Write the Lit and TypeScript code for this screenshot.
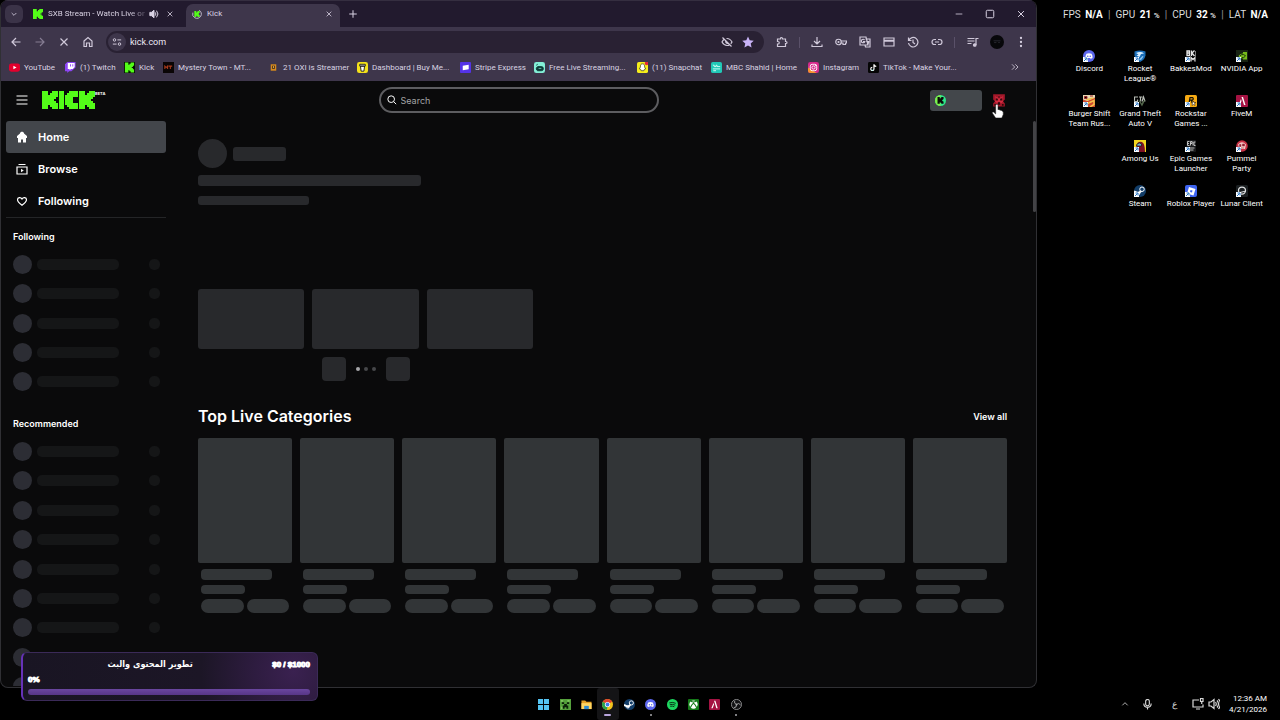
import { LitElement, html, svg, css, SVGTemplateResult } from "lit";
import { customElement, state } from "lit/decorators.js";
import { classMap } from "lit/directives/class-map.js";

const K_MARK = "M0 0h3v2h1v-1h1v-1h3v3h-1v1h-1v1h1v1h1v3h-3v-1h-1v-1h-1v2h-3z";

/* Outline icons on a 24 unit grid */
const line: Record<string, SVGTemplateResult> = {
  chevron: svg`<path d="M5 9l7 7 7-7" />`,
  up: svg`<path d="M4 16l8-8 8 8" />`,
  close: svg`<path d="M5 5l14 14M19 5L5 19" />`,
  plus: svg`<path d="M12 3v18M3 12h18" />`,
  back: svg`<path d="M21 12H4M12 4l-8 8 8 8" />`,
  forward: svg`<path d="M3 12h17M12 4l8 8-8 8" />`,
  home: svg`<path d="M4 10l8-7 8 7v11h-5v-7H9v7H4z" />`,
  tune: svg`<circle cx="6" cy="7" r="3" /><path d="M13 7h9M2 17h9" /><circle cx="18" cy="17" r="3" />`,
  eyeoff: svg`<path d="M3 3l18 18M7 6C4 8 2 12 2 12s4 7 10 7c2 0 4-.6 5.500-1.500M11 5c7-.5 11 7 11 7s-1 2-2.500 3.500M9.500 10a3.500 3.500 0 0 0 4.500 4.500" />`,
  puzzle: svg`<path d="M3 6h6V5a2 2 0 0 1 4 0v1h6v5h1a2 2 0 0 1 0 4h-1v6H3v-5h1a2.500 2.500 0 0 0 0-5H3z" />`,
  download: svg`<path d="M12 2v13M6 10l6 6 6-6M2 17v4h20v-4" />`,
  key: svg`<circle cx="7" cy="12" r="5.500" /><circle cx="7" cy="12" r="1" /><path d="M12 10h11v4h-2v3h-5v-3h-4" />`,
  translate: svg`<path d="M2 2h12l4 16H2zM13 6h9v16h-9l-1-4" /><path d="M11 8a3.500 3.500 0 1 0 .5 3H8M15 11h6M18 10v2M20 11c-1 4-3 5-4 6" />`,
  card: svg`<path d="M2 4h20v16H2z" /><path d="M2 9.500h20" stroke-width="4" />`,
  history: svg`<path d="M3 3v6h6M3.500 9A9.500 9.500 0 1 1 3 14M12 7v6l4 3" />`,
  link: svg`<path d="M10 7H7a5 5 0 0 0 0 10h3M14 7h3a5 5 0 0 1 0 10h-3M8 12h8" />`,
  queue: svg`<path d="M1 5h14M1 10h14M1 15h8M18 18V5h5" /><circle cx="15.500" cy="18" r="2.500" fill="currentColor" />`,
  square: svg`<rect x="3" y="3" width="18" height="18" rx="3" />`,
  minus: svg`<path d="M2 12h20" />`,
  more: svg`<path d="M3 4l8 8-8 8M13 4l8 8-8 8" />`,
  menu: svg`<path d="M1 4h22M1 12h22M1 20h22" />`,
  search: svg`<circle cx="10" cy="10" r="8" /><path d="M16 16l6 6" />`,
  browse: svg`<path d="M2 8h20v14H2zM5 3h14" /><path d="M10 11.500v7l5.500-3.500z" fill="currentColor" stroke="none" />`,
  heart: svg`<path d="M12 20.500C6.500 16.500 3 13.500 3 9.500c0-5 6.500-6 9-1.500 2.500-4.500 9-3.500 9 1.500 0 4-3.500 7-9 11z" />`,
  mic: svg`<rect x="8" y="1" width="8" height="14" rx="4" /><path d="M4 10c0 11 16 11 16 0M12 18v5" />`,
  monitor: svg`<path d="M14 4H2v14h20v-5M8 22h8" /><path d="M17 1h5v6h-5zM19.500 7v5" />`,
  sound: svg`<path d="M2 8h4l6-5v18l-6-5H2zM15 8q3 4 0 8M18 5q6 7 0 14M21 2q8 10 0 20" />`,
  speaker: svg`<path d="M2 8h4l6-5v18l-6-5H2z" fill="currentColor" /><path d="M15 8q3 4 0 8M18 4q7 8 0 16" />`,
};

/* Filled and multi-colour icons on a 24 unit grid */
const K = svg`<g transform="translate(5.500 4.500) scale(1.640)"><path d=${K_MARK} fill="#0b0b0b" /></g>`;
const art: Record<string, SVGTemplateResult> = {
  star: svg`<path d="M12 1l3.400 7.600 8.100.8-6.100 5.500 1.800 8.100-7.200-4.200-7.200 4.200 1.800-8.100L.5 9.400l8.100-.8z" fill="#c9b3f7" />`,
  dots: svg`<g fill="#d6cfe0"><circle cx="12" cy="4" r="2.300" /><circle cx="12" cy="12" r="2.300" /><circle cx="12" cy="20" r="2.300" /></g>`,
  profile: svg`<circle cx="12" cy="12" r="12" fill="#07070a" /><path d="M6 10h12M7 13h4M14 13h3" stroke="#2c2c33" stroke-width="1.500" />`,
  home: svg`<path d="M12 1L8 3.500V5L2 10v4h2v9h6v-6h4v6h6v-9h2v-4l-6-5V3.500z" fill="#fff" />`,
  kick: svg`<rect width="24" height="24" fill="#061204" /><path transform="translate(2 1.200) scale(2.500 2.400)" d=${K_MARK} fill="#53fc18" />`,
  kickfav: svg`<path transform="scale(3 2.667)" d=${K_MARK} fill="#53fc18" />`,
  kickload: svg`<circle cx="12" cy="12" r="10.500" fill="none" stroke="#c6c0d0" stroke-width="2" stroke-dasharray="46 20" transform="rotate(-60 12 12)" /><path transform="translate(5.600 5) scale(1.600 1.560)" d=${K_MARK} fill="#53fc18" />`,
  coin: svg`<circle cx="12" cy="12" r="12" fill="#2ee88a" /><path d="M12 0a12 12 0 0 0 0 24z" fill="#7df04a" />${K}`,
  youtube: svg`<rect y="3" width="24" height="18" rx="5" fill="#e3002d" /><path d="M9.500 8v8l7-4z" fill="#fff" />`,
  twitch: svg`<path d="M5 0L0 5v15h5v4l4-4h5l9-8V0z" fill="#8d45f5" /><path d="M6 2h15v9l-4 4h-4l-3 3v-3H6z" fill="#fff" /><path d="M11 5h2v5h-2zM16 5h2v5h-2z" fill="#8d45f5" />`,
  mystery: svg`<rect width="24" height="24" fill="#0a0505" /><path d="M4 15V9l3 3 3-3v6M12 9h8M16 9v6" fill="none" stroke="#a83a1c" stroke-width="2.300" />`,
  oxi: svg`<rect x="6" y="5" width="12" height="14" fill="#d78a1d" /><rect x="9" y="8" width="6" height="7" fill="#43321f" /><rect x="11" y="9" width="2" height="4" fill="#f2b044" />`,
  coffee: svg`<rect width="24" height="24" rx="5" fill="#f4e21a" /><path d="M6 5h12v4H6zM7.500 9h9l-1.500 11H9z" fill="#fff" stroke="#1b1a10" stroke-width="2" />`,
  stripe: svg`<rect width="24" height="24" rx="2" fill="#5433e6" /><path d="M6 8l13-2v10L6 18z" fill="#fff" />`,
  stream: svg`<rect width="24" height="24" rx="5" fill="#83efd6" /><path d="M8 10h8a4 4 0 0 1 0 9H9c-3 0-4-2-4-6zM5 7l3-2" fill="#0c3d38" stroke="#0c3d38" stroke-width="2" /><path d="M10 14h6" stroke="#83efd6" stroke-width="1.500" />`,
  snap: svg`<rect width="24" height="24" rx="4" fill="#f6ee1c" /><path d="M12 4c-3 0-4.500 2-4.500 5v2L5 15l3 1 1 3h6l1-3 3-1-2.500-4V9c0-3-1.500-5-4.500-5z" fill="#fff" stroke="#383609" stroke-width="1.500" /><circle cx="21" cy="3" r="4" fill="#e62638" />`,
  shahid: svg`<rect width="24" height="24" rx="4" fill="#20c8b7" /><path d="M4 7h3v3h4V7h2v3h7M4 15h16M5 19h6" fill="none" stroke="#d6fff6" stroke-width="2" />`,
  instagram: svg`<rect width="24" height="24" rx="5" fill="#d62a8c" /><path d="M0 12v7a5 5 0 0 0 5 5h14z" fill="#f5912d" /><g fill="none" stroke="#fff" stroke-width="2"><rect x="5" y="5" width="14" height="14" rx="4" /><circle cx="12" cy="12" r="3.500" /></g><circle cx="16.500" cy="7.500" r="1.200" fill="#fff" />`,
  tiktok: svg`<rect width="24" height="24" rx="3" fill="#050505" /><path d="M13 5v10a3.500 3.500 0 1 1-3.500-3.500M13 5c0 3 2 4.500 5 4.500" fill="none" stroke="#fff" stroke-width="2.600" /><path d="M8 17.500c1 1 3 .5 3-1" fill="none" stroke="#25f4ee" stroke-width="1" />`,
  avatar: svg`<path d="M2 2h20v9l-3 3 3 4v5H2v-5l3-4-3-3z" fill="#a3182a" /><path d="M5 5l4 3 3-4 3 4 4-3-2 6 2 4-4 3-3-2-3 2-4-3 2-4z" fill="#d42b40" /><path d="M7 9l3 1v3H7zM17 9l-3 1v3h3zM10 16h4v4h-4zM4 19h3v3H4zM17 19h3v3h-3zM11 5h2v4h-2z" fill="#30050c" />`,
  hand: svg`<path d="M8 2.500a2 2 0 0 1 4 0V10l1-.6 2.200.8 1 .4 2 .6 1 .8 1.800 1.500V18l-2.500 6H8l-5.500-8c-1-2 1-3 2.500-1.800L8 17z" fill="#fff" stroke="#222" stroke-width="1" />`,
  discord: svg`<circle cx="12" cy="12" r="12" fill="#5c67ee" /><path d="M7 7.500q5-2 10 0 2.500 4 2 8.500-2 1.500-4 1.500l-1-1.500h-4l-1 1.500q-2 0-4-1.500-.5-4.500 2-8.500z" fill="#fff" /><circle cx="9.500" cy="12.500" r="1.600" fill="#5c67ee" /><circle cx="14.500" cy="12.500" r="1.600" fill="#5c67ee" />`,
  rocket: svg`<path d="M1 3q11-4 22 0v8q-2 9-11 13Q3 20 1 11z" fill="#1b6eb8" /><path d="M4 6q10-4 16 1l-6 1-3 6-6-3 4-2z" fill="#d9efff" /><path d="M10 19l7-7 2 1-5 7z" fill="#8ec9f2" />`,
  bakkes: svg`<g fill="none" stroke="#e8e8e8" stroke-width="2.600"><path d="M4 2v9h5V2zM4 6h5M13 1v11M19 1l-5 5 5 6M12 23v-8l4 4 4-4v8" /></g><path d="M21 2v20" stroke="#777" stroke-width="2" />`,
  nvidia: svg`<rect width="24" height="24" fill="#182313" /><path d="M5 12q4-6 9-5v-3h8v15h-8v-2q-6 0-9-5z" fill="#75b91a" /><path d="M8 12q3-4 7-3 3 1 4 3-4 5-7 3" fill="none" stroke="#17270c" stroke-width="1.800" />`,
  burger: svg`<rect width="24" height="24" fill="#cf4930" /><path d="M0 0h24v5L9 12l-9-3z" fill="#e7d8b4" /><path d="M6 10l15-4M9 17l13-6v8l-8 5" stroke="#f2c04b" stroke-width="3" fill="none" /><path d="M3 3h5v4H3zM14 2h6" stroke="#9d2626" stroke-width="2" />`,
  gta: svg`<g fill="none" stroke="#b9bdb6" stroke-width="2.400"><path d="M8 4H1v9h6V9M10 4h7M13 4v9M16 13l3-9 3 9" /></g><path d="M9 11h4l2 6 4-6h3l-6 12z" fill="#53664b" />`,
  rockstar: svg`<rect width="24" height="24" rx="3" fill="#f7ab14" /><path d="M8 17l2-12h5q3 2 0 5H9M13 10l1 4" fill="none" stroke="#171207" stroke-width="2.500" /><path d="M17 12l1 3h4l-3 2 1 4-3-2-3 2 1-4-3-2h4z" fill="#fff" stroke="#171207" />`,
  fivem: svg`<rect width="24" height="24" rx="2" fill="#a51343" /><path d="M11 4h3l5 16h-3zM10 8l1 4-3 8H5z" fill="#fff" />`,
  among: svg`<rect width="24" height="24" fill="#f1d51f" /><path d="M5 24V10q3-9 11-6 6 3 6 20z" fill="#7c1025" /><path d="M6 8q5-4 9 0v4H5z" fill="#71b1c3" stroke="#20131a" stroke-width="1.500" />`,
  epic: svg`<rect x="3" width="19" height="24" rx="2" fill="#191a1c" /><g fill="none" stroke="#d9d9d9" stroke-width="1.700"><path d="M9 3H5v8h4M5 7h3M11 11V3h3v4h-3M16 3v8M21 4h-3v7h3M8 16h11M10 20h7" /></g>`,
  pummel: svg`<circle cx="12" cy="12" r="11.500" fill="#c93145" /><path d="M4 9q8-9 16 0l-2 9H7z" fill="#f1c6c4" /><path d="M7 9h3v4H7zM13 8h4v4h-4zM9 16h7" fill="#922132" stroke="#922132" />`,
  steam: svg`<circle cx="12" cy="12" r="12" fill="#123d68" /><path d="M0 13l9 4 6-6" stroke="#fff" stroke-width="4" fill="none" /><circle cx="16" cy="8.500" r="4.500" fill="#123d68" stroke="#fff" stroke-width="2" /><circle cx="8.500" cy="17" r="3" fill="none" stroke="#fff" stroke-width="1.500" />`,
  roblox: svg`<rect width="24" height="24" rx="4" fill="#3e64f0" /><path d="M8 4l13 4-4 13-13-4zM11 10l-1 4 4 1 1-4z" fill="#fff" fill-rule="evenodd" />`,
  lunar: svg`<rect width="24" height="24" rx="3" fill="#1b1f21" /><circle cx="12" cy="11" r="7" fill="none" stroke="#e1e3e4" stroke-width="2.500" /><path d="M4 16l16-4" stroke="#e1e3e4" stroke-width="2" />`,
  windows: svg`<path d="M0 0h11v11H0zM13 0h11v11H13zM0 13h11v11H0zM13 13h11v11H13z" fill="#55c4f2" />`,
  creeper: svg`<rect width="24" height="24" fill="#55a13c" /><path d="M2 2h5v4H2zM16 2h5v4h-5zM2 17h4v5H2z" fill="#7fc65e" /><path d="M4 7h5v4H4zM15 7h5v4h-5zM9 11h6v3h3v7h-4v-3h-4v3H6v-7h3z" fill="#0b2108" />`,
  folder: svg`<path d="M1 3h8l3 3h11v16H1z" fill="#e6a227" /><path d="M1 9h22v13H1z" fill="#ffd765" /><path d="M7 15h10v7H7z" fill="#2f8cd2" />`,
  chrome: svg`<circle cx="12" cy="12" r="12" fill="#f3c21b" /><path d="M12 12L1.600 6a12 12 0 0 1 20.800 0z" fill="#e1402f" /><path d="M12 12l-1 12A12 12 0 0 1 1.600 6z" fill="#2ba24c" /><circle cx="12" cy="12" r="5.700" fill="#fff" /><circle cx="12" cy="12" r="4.200" fill="#3f7de8" />`,
  spotify: svg`<circle cx="12" cy="12" r="12" fill="#1ed760" /><path d="M5 8.500q8-2.500 14 1M6 12.500q7-2 12 1M7 16q5-1.500 9 1" fill="none" stroke="#08260f" stroke-width="2" />`,
  xbox: svg`<rect width="24" height="24" rx="2" fill="#157a19" /><circle cx="12" cy="12" r="9" fill="#fff" /><path d="M6 5q6 3 12 0M5 19Q8 12 12 9q4 3 7 10" fill="none" stroke="#157a19" stroke-width="2.500" />`,
  obs: svg`<circle cx="12" cy="12" r="11" fill="#121214" stroke="#a6a6a8" stroke-width="1.700" /><path d="M12 12q-6-2-4-8M12 12q5-5 9 1M12 12q1 7-6 7" fill="none" stroke="#a6a6a8" stroke-width="2" /><circle cx="12" cy="12" r="2" fill="#a6a6a8" />`,
};

const icon = (name: string, size = "s12") =>
  html`<svg class="ico ${size}" viewBox="0 0 24 24" aria-hidden="true">${line[name]}</svg>`;
const pic = (name: string, size = "s12") =>
  html`<svg class="pic ${size}" viewBox="0 0 24 24" aria-hidden="true">${art[name]}</svg>`;

const BOOKMARKS = [
  ["youtube", "YouTube"],
  ["twitch", "(1) Twitch"],
  ["kick", "Kick"],
  ["mystery", "Mystery Town - MT..."],
  ["oxi", "21 OXI is Streamer"],
  ["coffee", "Dashboard | Buy Me..."],
  ["stripe", "Stripe Express"],
  ["stream", "Free Live Streaming..."],
  ["snap", "(11) Snapchat"],
  ["shahid", "MBC Shahid | Home"],
  ["instagram", "Instagram"],
  ["tiktok", "TikTok - Make Your..."],
];

const SHORTCUTS = [
  ["discord", "Discord"],
  ["rocket", "Rocket\nLeague®"],
  ["bakkes", "BakkesMod"],
  ["nvidia", "NVIDIA App"],
  ["burger", "Burger Shift\nTeam Rus..."],
  ["gta", "Grand Theft\nAuto V"],
  ["rockstar", "Rockstar\nGames ..."],
  ["fivem", "FiveM"],
  ["", ""],
  ["among", "Among Us"],
  ["epic", "Epic Games\nLauncher"],
  ["pummel", "Pummel\nParty"],
  ["", ""],
  ["steam", "Steam"],
  ["roblox", "Roblox Player"],
  ["lunar", "Lunar Client"],
];

const STATS = [
  ["FPS", "N/A", ""],
  ["GPU", "21", "%"],
  ["CPU", "32", "%"],
  ["LAT", "N/A", ""],
];

const TASKS = [
  ["windows", "Start", ""],
  ["creeper", "Minecraft", ""],
  ["folder", "Files", ""],
  ["chrome", "Chrome", "active"],
  ["steam", "Steam", ""],
  ["discord", "Discord", "open"],
  ["spotify", "Spotify", ""],
  ["xbox", "Xbox", ""],
  ["fivem", "FiveM", ""],
  ["obs", "OBS", "open"],
];

@customElement("app-root")
export class AppRoot extends LitElement {
  @state() private section = "Home";

  static styles = css`
    :host {
      display: block;
      --ui: Roboto, "Noto Sans", sans-serif;
      --site: Inter, "Liberation Sans", sans-serif;
      --block: #28292c;
      --card: #323537;
      font-family: var(--ui);
      color: #fff;
    }
    * { box-sizing: border-box; }
    button, a { font: inherit; color: inherit; text-decoration: none; }
    button { background: none; border: 0; padding: 0; display: flex; align-items: center; justify-content: center; }
    h2, h3, p, ul { margin: 0; padding: 0; list-style: none; }
    .ico { fill: none; stroke: currentColor; stroke-width: 2.400; flex: none; display: block; }
    .pic { flex: none; display: block; }
    .s8 { width: 8px; height: 8px; }
    .s10 { width: 10px; height: 10px; }
    .s11 { width: 11px; height: 11px; }
    .s12 { width: 12px; height: 12px; }
    .s14 { width: 14px; height: 14px; }

    .screen { position: relative; min-height: 100vh; display: flex; flex-direction: column; background: #000; }
    .desk { flex: 1; display: flex; }
    .window {
      flex: 1; min-width: 0; display: flex; flex-direction: column; position: relative;
      border: solid #303034; border-width: 0 1px 1px; border-radius: 8px; overflow: hidden; background: #0a0a0b;
    }

    .tabs { height: 27px; background: #221a2e; border-top: 1px solid #352e40; display: flex; align-items: center; color: #d9d2e3; }
    .tabmenu { width: 18px; height: 18px; border-radius: 6px; background: #3b3348; margin: 0 4px; }
    .tab { height: 23px; margin-top: 3px; display: flex; align-items: center; padding: 0 4px 4px 6px; font-size: 8px; }
    .tab .name { flex: 1; min-width: 0; white-space: nowrap; padding-left: 5px; }
    .tab.idle { width: 159px; gap: 2px; padding-right: 9px; }
    .tab.idle .name { padding-left: 3px; mask-image: linear-gradient(90deg, #000 85%, #0004); }
    .tab.active { width: 154px; background: #3e364b; border-radius: 7px 7px 0 0; }
    .tab button { width: 14px; height: 12px; }
    .newtab { width: 26px; height: 23px; }
    .winctl { margin-left: auto; display: flex; }
    .winctl button { width: 31px; height: 24px; }

    .toolbar { height: 29px; background: #3e364b; display: flex; align-items: center; padding: 1px 3px 0; color: #d0c9da; }
    .tool { width: 24px; height: 24px; flex: none; }
    .tool.off { color: #857c92; }
    .address {
      flex: 1; min-width: 0; height: 22px; margin: 0 6px; padding: 0 10px 0 2px; border-radius: 11px; background: #292133;
      display: flex; align-items: center; gap: 4px;
    }
    .site { width: 18px; height: 18px; border-radius: 9px; background: #3e364b; flex: none; }
    .address input { flex: 1; min-width: 0; border: 0; padding: 0; outline: 0; background: none; font: 9px var(--ui); color: #eee9f4; }
    .address .acts { display: flex; gap: 9px; }
    .sep { width: 1px; height: 11px; background: #5a5169; margin: 0 5px; flex: none; }
    .sep.end { margin-right: 6px; }

    .marks { height: 25px; background: #3e364b; display: flex; align-items: center; padding: 0 17px 3px 8px; font-size: 8px; color: #d9d3e1; }
    .marks ul { flex: 1; display: grid; grid-template-columns: 56px 59px 39px 105px 89px 103px 74px 103px 74px 97px 60px 1fr; }
    .marks a { display: flex; align-items: center; gap: 4px; white-space: nowrap; }

    .site-page { flex: 1; display: flex; flex-direction: column; font-family: var(--site); }
    .top { height: 40px; display: grid; grid-template-columns: 1fr 280px 1fr; align-items: center; padding-bottom: 2px; }
    .brand { display: flex; align-items: flex-start; padding-left: 15px; }
    .brand button { height: 18px; margin-right: 14px; }
    .wordmark { width: 53px; height: 18px; }
    .beta { font-size: 4px; line-height: 5px; font-weight: 700; }
    .search { display: flex; align-items: center; gap: 4px; height: 26px; border: 2px solid #5d5d60; border-radius: 13px; padding: 0 6px; }
    .search input { flex: 1; min-width: 0; border: 0; padding: 0; outline: 0; background: none; color: #fff; font: 9px var(--site); }
    .search input::placeholder { color: #a3a4a7; }
    .account { display: flex; justify-content: flex-end; align-items: center; gap: 10px; padding-right: 30px; }
    .wallet { width: 52px; height: 21px; border-radius: 3px; background: #43474b; justify-content: flex-start; padding-left: 5px; }
    .user { position: relative; }
    .cursor { position: absolute; left: -1px; top: 11px; }

    .body { flex: 1; display: flex; }
    .side { width: 166px; flex: none; height: 565px; overflow: hidden; padding: 0 1px 0 5px; }
    .nav a { display: flex; align-items: center; gap: 10px; height: 32px; padding-left: 10px; border-radius: 3px; font-size: 11px; font-weight: 600; }
    .nav a.on { background: #43464b; }
    .nav { border-bottom: 1px solid #242527; }
    .side h3 { font-size: 9px; line-height: 14px; font-weight: 600; padding: 12px 0 0 7px; }
    .rows { display: flex; flex-direction: column; justify-content: space-between; margin: 11px 6px 14px 7px; height: 136px; }
    .rows.long { height: 254px; }
    .row { display: flex; align-items: center; height: 19px; }
    .row i { display: block; background: #151617; }
    .row .face { width: 19px; height: 19px; border-radius: 50%; background: #2c2d34; }
    .row .label { width: 82px; height: 11px; border-radius: 5px; margin-left: 5px; }
    .row .count { width: 11px; height: 11px; border-radius: 5px; margin-left: auto; }

    .main { flex: 1; min-width: 0; padding: 18px 29px 0 31px; }
    .main i { display: block; background: var(--block); border-radius: 3px; }
    .who { display: flex; align-items: center; gap: 6px; margin-bottom: 7px; }
    .main .face { width: 29px; height: 29px; border-radius: 50%; }
    .main .nick { width: 53px; height: 14px; }
    .main .line1 { width: 223px; height: 11px; }
    .main .line2 { width: 111px; height: 9px; margin-top: 10px; }
    .hero { width: 335px; margin-top: 84px; }
    .thumbs { display: grid; grid-template-columns: repeat(3, 1fr); gap: 8px; }
    .main .thumbs i { height: 60px; }
    .pager { display: flex; justify-content: center; align-items: center; gap: 10px; margin-top: 8px; }
    .pager button { width: 24px; height: 24px; border-radius: 4px; background: var(--block); }
    .pips { display: flex; gap: 4px; }
    .main .pips i { width: 4px; height: 4px; border-radius: 50%; background: #46474a; }
    .main .pips i:first-child { background: #a6a6a9; }
    .heading { display: flex; justify-content: space-between; align-items: center; margin-top: 24px; height: 22px; }
    .heading h2 { font-size: 16px; font-weight: 600; }
    .heading a { font-size: 9px; font-weight: 600; }
    .cards { display: grid; grid-template-columns: repeat(8, 1fr); gap: 8px; margin-top: 11px; }
    .main .cards i { background: var(--card); }
    .main .cards .cover { height: 125px; border-radius: 2px; }
    .meta { padding: 6px 3px 0; }
    .main .meta .t1 { width: 71px; height: 11px; border-radius: 4px; }
    .main .meta .t2 { width: 44px; height: 9px; border-radius: 4px; margin-top: 5px; }
    .tags { display: grid; grid-template-columns: 1fr 1fr; gap: 3px; margin-top: 5px; }
    .main .tags i { height: 14px; border-radius: 7px; }
    .thumb { position: absolute; right: 0; top: 121px; width: 3px; height: 91px; border-radius: 2px; background: #434346; }

    .panel { width: 243px; flex: none; padding: 7px 12px 0 26px; }
    .stats { display: flex; justify-content: space-between; font: 10px/15px var(--ui); color: #ddd; white-space: nowrap; }
    .stats b { margin-left: 2px; color: #fff; }
    .stats small { font-size: 8px; font-weight: 700; }
    .bar { color: #999; }
    .icons { display: grid; grid-template-columns: repeat(4, 1fr); grid-auto-rows: 45px; margin: 27px 1px 0 1px; }
    .icons a { display: flex; flex-direction: column; align-items: center; gap: 2px; font-size: 8px; line-height: 10px; text-align: center; }
    .caption { white-space: pre; }
    .arrowed { position: relative; }
    .arrow { position: absolute; left: 0; bottom: 0; }

    .taskbar { height: 32px; display: grid; grid-template-columns: 1fr 214px 1fr; align-items: stretch; }
    .apps { grid-column: 2; display: flex; }
    .apps button { flex: 1; position: relative; border-radius: 3px; }
    .apps button.active { background: #141416; }
    .apps button.open::after, .apps button.active::after { content: ""; position: absolute; bottom: 4px; width: 2px; height: 2px; border-radius: 1px; background: #a9a9ad; }
    .apps button.active::after { width: 7px; background: #b9a6dd; }
    .tray { display: flex; justify-content: flex-end; align-items: center; padding-right: 13px; color: #dadada; }
    .tray button { width: 16px; height: 20px; }
    .tray .wide { width: 22px; }
    .tray .lang { width: 32px; font-size: 9px; }
    .clock { width: 44px; margin-left: 1px; font-size: 8px; line-height: 11px; text-align: right; color: #fff; white-space: nowrap; }

    .goal {
      position: absolute; left: 21px; bottom: 19px; width: 297px; height: 49px; padding: 5px 7px 5px 5px;
      border: 1px solid #3b2a58; border-left: 2px solid #6632b8; border-radius: 6px; overflow: hidden;
      background: radial-gradient(circle at 92% 40%, #3a2150 0, #2e1c40 14%, #1c1626 34%, #191523 100%);
      display: flex; flex-direction: column;
    }
    .goal header { display: grid; grid-template-columns: 1fr auto; align-items: center; }
    .goal .what { text-align: center; font: 700 9px/13px "DejaVu Sans Condensed", "DejaVu Sans", sans-serif; }
    .goal .sum, .goal .pct { font: 700 8px/11px Impact, "Liberation Sans Narrow", "Liberation Sans", sans-serif; -webkit-text-stroke: 1px #fff; }
    .goal .pct { margin-top: 3px; }
    .goal .track { height: 6px; margin-top: auto; border-radius: 3px; background: linear-gradient(#6a469f, #573687); }
  `;

  private rows(count: number, long = false) {
    return html`<ul class=${classMap({ rows: true, long })}>
      ${Array.from({ length: count }, () => html`<li class="row"><i class="face"></i><i class="label"></i><i class="count"></i></li>`)}
    </ul>`;
  }

  private tool(name: string, label: string, off = false) {
    return html`<button class=${classMap({ tool: true, off })} aria-label=${label}>${icon(name)}</button>`;
  }

  private browser() {
    return html`
      <div class="tabs">
        <button class="tabmenu" aria-label="Search tabs">${icon("chevron", "s8")}</button>
        <div class="tab idle">
          ${pic("kickfav", "s10")}<span class="name">SXB Stream - Watch Live on</span>
          <button aria-label="Mute tab">${icon("speaker", "s10")}</button>
          <button aria-label="Close tab">${icon("close", "s8")}</button>
        </div>
        <div class="tab active">
          ${pic("kickload", "s10")}<span class="name">Kick</span>
          <button aria-label="Close tab">${icon("close", "s8")}</button>
        </div>
        <button class="newtab" aria-label="New tab">${icon("plus", "s10")}</button>
        <div class="winctl">
          <button aria-label="Minimize">${icon("minus", "s8")}</button>
          <button aria-label="Maximize">${icon("square", "s10")}</button>
          <button aria-label="Close">${icon("close", "s10")}</button>
        </div>
      </div>
      <div class="toolbar">
        ${this.tool("back", "Back")}${this.tool("forward", "Forward", true)}${this.tool("close", "Stop")}${this.tool("home", "Home")}
        <div class="address">
          <button class="site" aria-label="Site information">${icon("tune", "s10")}</button>
          <input aria-label="Address" .value=${"kick.com"} />
          <div class="acts">
            <button aria-label="Tracking blocked">${icon("eyeoff")}</button>
            <button aria-label="Bookmark">${pic("star", "s12")}</button>
          </div>
        </div>
        ${this.tool("puzzle", "Extensions")}<span class="sep"></span>
        ${this.tool("download", "Downloads")}${this.tool("key", "Passwords")}${this.tool("translate", "Translate")}
        ${this.tool("card", "Payments")}${this.tool("history", "History")}${this.tool("link", "Copy link")}
        <span class="sep end"></span>
        ${this.tool("queue", "Media")}
        <button class="tool" aria-label="Profile">${pic("profile", "s14")}</button>
        <button class="tool" aria-label="Menu">${pic("dots", "s12")}</button>
      </div>
      <div class="marks">
        <ul>${BOOKMARKS.map(([i, t]) => html`<li><a href="#">${pic(i, "s11")}<span>${t}</span></a></li>`)}</ul>
        <button aria-label="More bookmarks">${icon("more", "s8")}</button>
      </div>`;
  }

  private navItem(label: string, glyph: unknown) {
    return html`<a href="#" class=${classMap({ on: this.section === label })} @click=${(e: Event) => {
      e.preventDefault();
      this.section = label;
    }}>${glyph}<span>${label}</span></a>`;
  }

  private sitePage() {
    return html`<div class="site-page">
      <header class="top">
        <div class="brand">
          <button aria-label="Toggle sidebar">${icon("menu", "s12")}</button>
          <svg class="wordmark" viewBox="0 0 53 18" role="img" aria-label="Kick" fill="#53fc18">
            <path transform="scale(2)" d=${K_MARK} />
            <rect x="17" width="5" height="18" />
            <path d="M25 2h2V0h9v6h-5v6h5v6h-9v-2h-2v-2h-2V4h2z" />
            <path transform="translate(37) scale(2)" d=${K_MARK} />
          </svg>
          <span class="beta">BETA</span>
        </div>
        <label class="search">${icon("search", "s10")}<input type="text" placeholder="Search" aria-label="Search" /></label>
        <div class="account">
          <button class="wallet" aria-label="Wallet">${pic("coin", "s11")}</button>
          <button class="user" aria-label="Account">${pic("avatar", "s14")}<span class="cursor">${pic("hand", "s14")}</span></button>
        </div>
      </header>
      <div class="body">
        <aside class="side">
          <nav class="nav">
            ${this.navItem("Home", pic("home"))}${this.navItem("Browse", icon("browse"))}${this.navItem("Following", icon("heart"))}
          </nav>
          <h3>Following</h3>
          ${this.rows(5)}
          <h3>Recommended</h3>
          ${this.rows(9, true)}
        </aside>
        <main class="main">
          <div class="who"><i class="face"></i><i class="nick"></i></div>
          <i class="line1"></i><i class="line2"></i>
          <div class="hero">
            <div class="thumbs"><i></i><i></i><i></i></div>
            <div class="pager">
              <button aria-label="Previous"></button>
              <span class="pips"><i></i><i></i><i></i></span>
              <button aria-label="Next"></button>
            </div>
          </div>
          <div class="heading"><h2>Top Live Categories</h2><a href="#">View all</a></div>
          <div class="cards">
            ${Array.from({ length: 8 }, () => html`<div>
              <i class="cover"></i>
              <div class="meta"><i class="t1"></i><i class="t2"></i><div class="tags"><i></i><i></i></div></div>
            </div>`)}
          </div>
        </main>
      </div>
      <span class="thumb"></span>
    </div>`;
  }

  render() {
    return html`<div class="screen">
      <div class="desk">
        <section class="window">${this.browser()}${this.sitePage()}</section>
        <section class="panel">
          <div class="stats">
            ${STATS.map(([k, v, u], n) => html`${n ? html`<span class="bar">|</span>` : ""}<span>${k} <b>${v}</b> ${u ? html`<small>${u}</small>` : ""}</span>`)}
          </div>
          <div class="icons">
            ${SHORTCUTS.map(([i, t]) => t
              ? html`<a href="#"><span class="arrowed">${pic(i)}
                  <svg class="arrow" width="5" height="5" viewBox="0 0 10 10"><rect width="10" height="10" fill="#fff" /><path d="M2 8l5-5M3 2h5v5" stroke="#2272c4" stroke-width="2" fill="none" /></svg>
                </span><span class="caption">${t}</span></a>`
              : html`<div></div>`)}
          </div>
        </section>
      </div>
      <footer class="taskbar">
        <div class="apps">${TASKS.map(([i, t, s]) => html`<button class=${s} aria-label=${t}>${pic(i, "s11")}</button>`)}</div>
        <div class="tray">
          <button class="wide" aria-label="Hidden icons">${icon("up", "s8")}</button>
          <button class="wide" aria-label="Microphone">${icon("mic", "s11")}</button>
          <button class="lang" aria-label="Language">ع</button>
          <button aria-label="Network">${icon("monitor")}</button>
          <button aria-label="Volume">${icon("sound")}</button>
          <div class="clock"><p>12:36 AM</p><p>4/21/2026</p></div>
        </div>
      </footer>
      <section class="goal">
        <header><span class="what" dir="rtl">تطوير المحتوى والبث</span><span class="sum">$0 / $1000</span></header>
        <span class="pct">0%</span>
        <div class="track"></div>
      </section>
    </div>`;
  }
}
